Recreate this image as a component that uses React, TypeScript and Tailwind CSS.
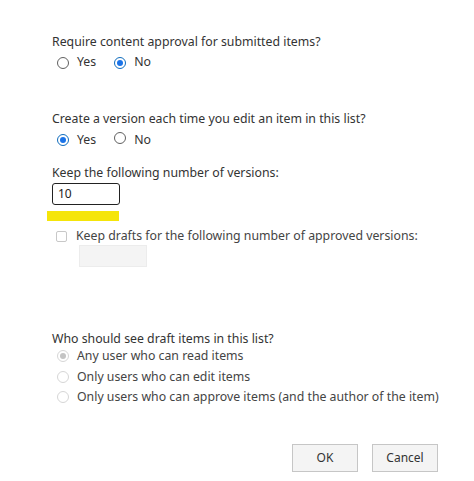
import React from "react";

const font = { fontFamily: '"Segoe UI", "Noto Sans", "Open Sans", sans-serif' };

function Radio({ checked = false, disabled = false }: { checked?: boolean; disabled?: boolean }) {
  if (disabled) {
    return (
      <span className="inline-flex items-center justify-center w-[12px] h-[12px] rounded-full border border-[#d6d6d6] bg-white">
        {checked && <span className="w-[6px] h-[6px] rounded-full bg-[#c4c4c4]" />}
      </span>
    );
  }
  return (
    <span
      className={
        "inline-flex items-center justify-center w-[12px] h-[12px] rounded-full border " +
        (checked ? "border-[#0f6cbd]" : "border-[#606060]")
      }
    >
      {checked && <span className="w-[6px] h-[6px] rounded-full bg-[#1a73e8]" />}
    </span>
  );
}

export default function App() {
  return (
    <div className="w-[474px] h-[481px] bg-white text-[12.3px] text-[#333] relative" style={font}>
      <div className="pl-[52px] pt-[32px]">
        <div className="leading-[20px]">Require content approval for submitted items?</div>
        <div className="flex items-center h-[21px] pl-[5px]">
          <Radio />
          <span className="ml-[8px]">Yes</span>
          <span className="ml-[18px]"><Radio checked /></span>
          <span className="ml-[8px]">No</span>
        </div>

        <div className="leading-[20px] mt-[36px]">Create a version each time you edit an item in this list?</div>
        <div className="flex items-center h-[22px] pl-[5px]">
          <Radio checked />
          <span className="ml-[8px]">Yes</span>
          <span className="ml-[18px]"><Radio /></span>
          <span className="ml-[8px]">No</span>
        </div>

        <div className="leading-[20px] mt-[12px]">Keep the following number of versions:</div>
        <div className="w-[68px] h-[22px] border-[1.5px] border-[#222] rounded-[3px] flex items-center pl-[5px] text-[12px] text-[#222]">
          10
        </div>
        <div className="w-[72px] h-[10px] bg-[#f5e50a] -ml-[5px] mt-[6px]" />

        <div className="flex items-center mt-[7px] h-[16px]">
          <span className="ml-[4px] w-[11px] h-[11px] border border-[#c8c8c8] rounded-[2px] bg-white" />
          <span className="ml-[9px] text-[#444]">Keep drafts for the following number of approved versions:</span>
        </div>
        <div className="ml-[27px] mt-[1px] w-[68px] h-[22px] bg-[#f4f4f4] border border-[#ececec]" />

        <div className="leading-[20px] mt-[62px]">Who should see draft items in this list?</div>
        <div className="flex flex-col pl-[5px] text-[#444] -mt-[3px]">
          <div className="flex items-center h-[20.5px]">
            <Radio disabled checked />
            <span className="ml-[8px]">Any user who can read items</span>
          </div>
          <div className="flex items-center h-[20.5px]">
            <Radio disabled />
            <span className="ml-[8px]">Only users who can edit items</span>
          </div>
          <div className="flex items-center h-[20.5px]">
            <Radio disabled />
            <span className="ml-[8px]">Only users who can approve items (and the author of the item)</span>
          </div>
        </div>

        <div className="flex justify-end gap-[14px] mt-[36px] pr-[36px] text-[12px] text-[#333]">
          <button className="w-[66px] h-[28px] bg-[#f4f4f4] border border-[#c6c6c6]">OK</button>
          <button className="w-[66px] h-[28px] bg-[#f4f4f4] border border-[#c6c6c6]">Cancel</button>
        </div>
      </div>
    </div>
  );
}
